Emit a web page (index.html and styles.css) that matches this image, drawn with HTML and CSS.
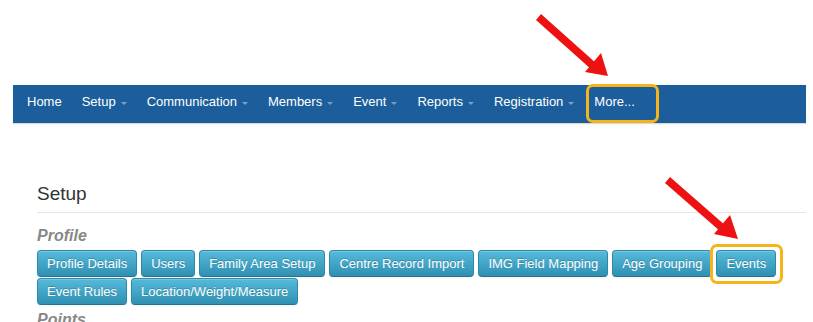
FILE: index.html
```html
<!DOCTYPE html>
<html>
<head>
<meta charset="utf-8">
<link rel="stylesheet" href="styles.css">
</head>
<body>
<div class="page">
  <div class="topspace"></div>
  <nav class="navbar">
    <ul class="nav">
      <li><a>Home</a></li>
      <li><a>Setup<span class="caret"></span></a></li>
      <li><a>Communication<span class="caret"></span></a></li>
      <li><a>Members<span class="caret"></span></a></li>
      <li><a>Event<span class="caret"></span></a></li>
      <li><a>Reports<span class="caret"></span></a></li>
      <li><a>Registration<span class="caret"></span></a></li>
      <li><a>More...</a></li>
    </ul>
  </nav>
  <main class="content">
    <h2 class="page-header">Setup</h2>
    <h4 class="section">Profile</h4>
    <div class="btns">
      <span class="btn">Profile Details</span>
      <span class="btn">Users</span>
      <span class="btn">Family Area Setup</span>
      <span class="btn">Centre Record Import</span>
      <span class="btn">IMG Field Mapping</span>
      <span class="btn">Age Grouping</span>
      <span class="btn">Events</span>
      <span class="btn">Event Rules</span>
      <span class="btn">Location/Weight/Measure</span>
    </div>
    <h4 class="section">Points</h4>
  </main>

  <div class="hl hl-more"></div>
  <div class="hl hl-events"></div>
  <svg class="arrows" width="813" height="322" viewBox="0 0 813 322">
    <g fill="#ee1111" stroke="none">
      <polygon points="536,20 541,14 597,64 592,70"/>
      <polygon points="585,72 601,53 608,76"/>
      <polygon points="665,183 670,177 726,226 721,232"/>
      <polygon points="714,234 730,215 738,239"/>
    </g>
  </svg>
</div>
</body>
</html>
```
FILE: styles.css
```css
html, body {
  margin: 0;
  padding: 0;
  background: #fff;
  overflow: hidden;
}
.page {
  position: relative;
  width: 813px;
  height: 322px;
  font-family: "Liberation Sans", Arial, sans-serif;
  color: #333;
}
.topspace {
  height: 85px;
}
.navbar {
  margin-left: 13px;
  width: 793px;
  height: 38px;
  background: #1b5e9b;
  box-shadow: 0 1px 1px rgba(0,0,0,0.15);
  display: flex;
  align-items: flex-start;
}
.nav {
  list-style: none;
  margin: 0;
  padding: 0 0 0 4px;
  display: flex;
  align-items: center;
}
.nav a {
  display: flex;
  align-items: center;
  padding: 0 10px;
  font-size: 13px;
  color: #fff;
  line-height: 34px;
}
.caret {
  display: inline-block;
  width: 0;
  height: 0;
  margin-left: 5px;
  margin-top: 2px;
  border-left: 3px solid transparent;
  border-right: 3px solid transparent;
  border-top: 3px solid #7d9fc2;
}
.content {
  padding: 0 7px 0 37px;
  margin-top: 60px;
}
.page-header {
  margin: 0 0 13px;
  font-size: 19px;
  font-weight: normal;
  line-height: 22px;
  padding-bottom: 7px;
  border-bottom: 1px solid #e6e6e6;
  color: #333;
}
.section {
  margin: 0 0 4px;
  font-size: 16px;
  line-height: 20px;
  font-weight: bold;
  font-style: italic;
  color: #888;
}
.btns {
  display: flex;
  flex-wrap: wrap;
  column-gap: 4px;
  row-gap: 1px;
  width: 760px;
  margin-bottom: 5px;
}
.btn {
  display: inline-block;
  box-sizing: border-box;
  height: 27px;
  line-height: 25px;
  padding: 0 9px;
  font-size: 13px;
  color: #fff;
  text-shadow: 0 -1px 0 rgba(0,0,0,0.2);
  background: linear-gradient(to bottom, #56badb, #2f90b2);
  border: 1px solid #2d89a9;
  border-bottom-color: #25738f;
  border-radius: 4px;
  box-shadow: inset 0 1px 0 rgba(255,255,255,0.2), 0 1px 2px rgba(0,0,0,0.05);
}
.hl {
  position: absolute;
  box-sizing: border-box;
  border: 3px solid #f5b51a;
  border-radius: 7px;
}
.hl-more {
  left: 586px;
  top: 84px;
  width: 73px;
  height: 39px;
}
.hl-events {
  left: 710px;
  top: 244px;
  width: 73px;
  height: 40px;
}
.arrows {
  position: absolute;
  left: 0;
  top: 0;
  pointer-events: none;
}
```
